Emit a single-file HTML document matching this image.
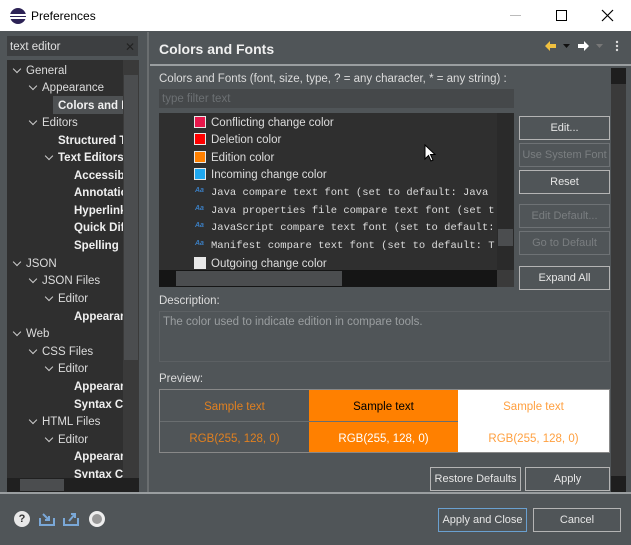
<!DOCTYPE html><html><head><style>
*{box-sizing:border-box;margin:0;padding:0}
body{width:631px;height:545px;position:relative;overflow:hidden;background:#505558;font-family:"Liberation Sans",sans-serif;font-size:11.5px;color:#dcdcdc}
.a{position:absolute}
.t{position:absolute;white-space:nowrap;line-height:16px;margin-top:1px}
.btn{position:absolute;border:1px solid #b4b4b4;color:#e6e6e6;text-align:center;line-height:23px;font-size:11px;background:#505558;white-space:nowrap;overflow:hidden}
.dis{border-color:#6e7275;color:#7a7e80}
.mono{font-family:"Liberation Mono","DejaVu Sans Mono",monospace;font-size:10.5px}
.sw{position:absolute;width:12px;height:12px;border:1px solid #e8e8e8}
.aa{position:absolute;color:#3b7fc4;font-size:7px;font-style:italic;font-weight:bold}
b{color:#f0f0f0}
.cv{display:inline-block;width:6px;height:6px;border-right:1.5px solid #ccc;border-bottom:1.5px solid #ccc;transform:rotate(45deg);margin:0 6px 3px 2px;vertical-align:middle}
</style></head><body>
<div class="a" style="left:0;top:0;width:631px;height:31px;background:#fff"></div>
<div class="a" style="left:10px;top:8px;width:16px;height:16px;border-radius:50%;background:#2c2255"></div>
<div class="a" style="left:10px;top:14px;width:16px;height:1.5px;background:#fff"></div>
<div class="a" style="left:10px;top:17px;width:16px;height:1.5px;background:#fff"></div>
<div class="t" style="left:31px;top:7px;color:#000;font-size:12px">Preferences</div>
<div class="a" style="left:510px;top:15px;width:11px;height:1px;background:#bbb"></div>
<div class="a" style="left:556px;top:10px;width:11px;height:11px;border:1px solid #000"></div>
<svg class="a" style="left:601px;top:9px" width="13" height="13"><path d="M1 1L12 12M12 1L1 12" stroke="#000" stroke-width="1.2"/></svg>

<div class="a" style="left:7px;top:36px;width:131px;height:20px;background:#3d3f41"></div>
<div class="t" style="left:10px;top:38px;color:#e0e0e0">text editor</div>
<div class="t" style="left:125px;top:38px;color:#222;font-size:12px">✕</div>
<div class="a" style="left:7px;top:60px;width:132px;height:432px;background:#2f2f2f"></div>
<div class="a" style="left:123px;top:60px;width:16px;height:418px;background:#3a3a3a"></div>
<div class="a" style="left:124px;top:75px;width:14px;height:285px;background:#4b4d4f"></div>
<div class="a" style="left:7px;top:478px;width:132px;height:14px;background:#202020"></div>
<div class="a" style="left:20px;top:479px;width:44px;height:12px;background:#4b4d4f"></div>
<div class="a" style="left:53px;top:96px;width:70px;height:18px;background:#4e5153"></div>
<div style="position:absolute;left:0;top:0;width:123px;height:478px;overflow:hidden">
<div class="t" style="left:12px;top:62px"><i class="cv"></i>General</div>
<div class="t" style="left:28px;top:79px"><i class="cv"></i>Appearance</div>
<div class="t" style="left:58px;top:97px"><b>Colors and Fonts</b></div>
<div class="t" style="left:28px;top:114px"><i class="cv"></i>Editors</div>
<div class="t" style="left:58px;top:132px"><b>Structured Text</b></div>
<div class="t" style="left:44px;top:149px"><i class="cv"></i><b>Text Editors</b></div>
<div class="t" style="left:74px;top:167px"><b>Accessibility</b></div>
<div class="t" style="left:74px;top:184px"><b>Annotations</b></div>
<div class="t" style="left:74px;top:202px"><b>Hyperlinking</b></div>
<div class="t" style="left:74px;top:219px"><b>Quick Diff</b></div>
<div class="t" style="left:74px;top:237px"><b>Spelling</b></div>
<div class="t" style="left:12px;top:255px"><i class="cv"></i>JSON</div>
<div class="t" style="left:28px;top:272px"><i class="cv"></i>JSON Files</div>
<div class="t" style="left:44px;top:290px"><i class="cv"></i>Editor</div>
<div class="t" style="left:74px;top:308px"><b>Appearance</b></div>
<div class="t" style="left:12px;top:325px"><i class="cv"></i>Web</div>
<div class="t" style="left:28px;top:343px"><i class="cv"></i>CSS Files</div>
<div class="t" style="left:44px;top:360px"><i class="cv"></i>Editor</div>
<div class="t" style="left:74px;top:378px"><b>Appearance</b></div>
<div class="t" style="left:74px;top:396px"><b>Syntax Coloring</b></div>
<div class="t" style="left:28px;top:413px"><i class="cv"></i>HTML Files</div>
<div class="t" style="left:44px;top:431px"><i class="cv"></i>Editor</div>
<div class="t" style="left:74px;top:448px"><b>Appearance</b></div>
<div class="t" style="left:74px;top:466px"><b>Syntax Coloring</b></div>
</div>
<div class="a" style="left:147px;top:32px;width:2px;height:460px;background:#6a6e70"></div>

<div class="t" style="left:159px;top:40px;font-size:14px;font-weight:bold;color:#f0f0f0">Colors and Fonts</div>
<svg class="a" style="left:543px;top:40px" width="80" height="12">
<path d="M2 6L7 1V4H13V8H7V11Z" fill="#f0c040"/>
<path d="M20 4H27L23.5 8Z" fill="#111"/>
<path d="M46 6L41 1V4H35V8H41V11Z" fill="#fff"/>
<path d="M53 4H60L56.5 8Z" fill="#777"/>
<circle cx="74" cy="2" r="1.2" fill="#ddd"/><circle cx="74" cy="6" r="1.2" fill="#ddd"/><circle cx="74" cy="10" r="1.2" fill="#ddd"/>
</svg>
<div class="a" style="left:150px;top:64px;width:481px;height:2px;background:#9a9ea0"></div>

<div class="a" style="left:611px;top:68px;width:15px;height:424px;background:#3a3a3a"></div>
<div class="a" style="left:611px;top:68px;width:15px;height:16px;background:#1e1e1e"></div>
<div class="a" style="left:611px;top:476px;width:15px;height:16px;background:#1e1e1e"></div>

<div class="t" style="left:159px;top:70px">Colors and Fonts (font, size, type, ? = any character, * = any string) :</div>
<div class="a" style="left:159px;top:89px;width:355px;height:19px;background:#45484a"></div>
<div class="t" style="left:162px;top:90px;color:#6c7073">type filter text</div>

<div class="a" style="left:159px;top:113px;width:355px;height:174px;background:#2f2f2f"></div>
<div class="a" style="left:497px;top:113px;width:17px;height:157px;background:#2a2a2a"></div>
<div class="a" style="left:498px;top:229px;width:15px;height:17px;background:#4b4d4f"></div>
<div class="a" style="left:159px;top:270px;width:355px;height:17px;background:#151515"></div>
<div class="a" style="left:176px;top:271px;width:166px;height:15px;background:#4b4d4f"></div>
<div class="a" style="left:497px;top:270px;width:17px;height:17px;background:#3a3a3a"></div>
<div class="sw" style="left:194px;top:116px;background:#e8184c"></div>
<div class="t" style="left:211px;top:114px">Conflicting change color</div>
<div class="sw" style="left:194px;top:133px;background:#f00"></div>
<div class="t" style="left:211px;top:131px">Deletion color</div>
<div class="sw" style="left:194px;top:151px;background:#ff8000"></div>
<div class="t" style="left:211px;top:149px">Edition color</div>
<div class="sw" style="left:194px;top:168px;background:#20a8f0"></div>
<div class="t" style="left:211px;top:166px">Incoming change color</div>
<div class="aa" style="left:195px;top:187px">Aa</div><div class="t mono" style="left:211px;top:184px">Java compare text font (set to default: Java</div>
<div class="aa" style="left:195px;top:205px">Aa</div><div class="t mono" style="left:211px;top:202px">Java properties file compare text font (set t</div>
<div class="aa" style="left:195px;top:222px">Aa</div><div class="t mono" style="left:211px;top:219px">JavaScript compare text font (set to default:</div>
<div class="aa" style="left:195px;top:240px">Aa</div><div class="t mono" style="left:211px;top:237px">Manifest compare text font (set to default: T</div>
<div class="sw" style="left:194px;top:257px;background:#e8e8e8"></div>
<div class="t" style="left:211px;top:255px">Outgoing change color</div>
<svg class="a" style="left:424px;top:144px" width="12" height="18"><path d="M1 1V15L4.5 11.5L7 17L9 16L6.5 10.5H11Z" fill="#fff" stroke="#000"/></svg>

<div class="btn" style="left:519px;top:116px;width:91px;height:24px">Edit...</div>
<div class="btn dis" style="left:519px;top:143px;width:91px;height:24px">Use System Font</div>
<div class="btn" style="left:519px;top:170px;width:91px;height:24px">Reset</div>
<div class="btn dis" style="left:519px;top:204px;width:91px;height:24px">Edit Default...</div>
<div class="btn dis" style="left:519px;top:231px;width:91px;height:24px">Go to Default</div>
<div class="btn" style="left:519px;top:266px;width:91px;height:24px">Expand All</div>

<div class="t" style="left:159px;top:292px">Description:</div>
<div class="a" style="left:159px;top:311px;width:451px;height:51px;border:1px solid #5c6063"></div>
<div class="t" style="left:163px;top:313px;color:#9a9ea0">The color used to indicate edition in compare tools.</div>

<div class="t" style="left:159px;top:370px">Preview:</div>
<div class="a" style="left:159px;top:389px;width:451px;height:64px;border:1px solid #888"></div>
<div class="a" style="left:309px;top:390px;width:149px;height:62px;background:#ff8000"></div>
<div class="a" style="left:458px;top:390px;width:151px;height:62px;background:#fff"></div>
<div class="a" style="left:160px;top:421px;width:298px;height:1px;background:#6a6e70"></div>
<div class="t" style="left:160px;top:398px;width:149px;text-align:center;color:#e08020">Sample text</div>
<div class="t" style="left:309px;top:398px;width:149px;text-align:center;color:#000">Sample text</div>
<div class="t" style="left:458px;top:398px;width:151px;text-align:center;color:#ffa040">Sample text</div>
<div class="t" style="left:160px;top:430px;width:149px;text-align:center;color:#e08020">RGB(255, 128, 0)</div>
<div class="t" style="left:309px;top:430px;width:149px;text-align:center;color:#fff">RGB(255, 128, 0)</div>
<div class="t" style="left:458px;top:430px;width:151px;text-align:center;color:#ffa040">RGB(255, 128, 0)</div>

<div class="btn" style="left:430px;top:467px;width:91px;height:24px">Restore Defaults</div>
<div class="btn" style="left:525px;top:467px;width:85px;height:24px">Apply</div>

<div class="a" style="left:0;top:492px;width:631px;height:2px;background:#9a9ea0"></div>
<div class="a" style="left:14px;top:511px;width:16px;height:16px;border-radius:50%;background:#e8e8e8;color:#333;font-weight:bold;font-size:11px;text-align:center;line-height:16px">?</div>
<svg class="a" style="left:38px;top:511px" width="18" height="16"><path d="M2 7V14H16V7M5 3L11 9M11 5V9H7" stroke="#7aa8d8" stroke-width="2" fill="none"/></svg>
<svg class="a" style="left:62px;top:510px" width="18" height="17"><path d="M2 8V15H16V8M7 11L13 4M9 4H13V8" stroke="#7aa8d8" stroke-width="2" fill="none"/></svg>
<div class="a" style="left:89px;top:511px;width:16px;height:16px;border-radius:50%;background:#eee;border:3px solid #eee"><div style="width:10px;height:10px;border-radius:50%;background:#999"></div></div>
<div class="btn" style="left:438px;top:508px;width:89px;height:24px;border-color:#6aa0d0">Apply and Close</div>
<div class="btn" style="left:533px;top:508px;width:88px;height:24px">Cancel</div>
</body></html>
